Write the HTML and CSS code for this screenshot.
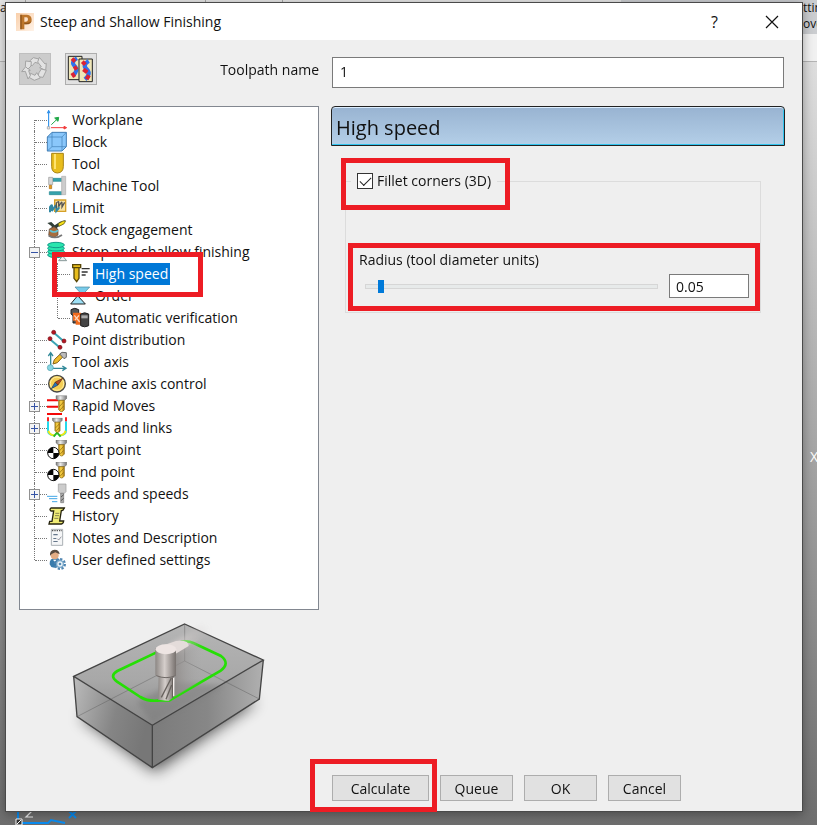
FILE: index.html
```html
<!DOCTYPE html>
<html lang="en">
<head>
<meta charset="utf-8">
<title>Steep and Shallow Finishing</title>
<link rel="stylesheet" href="styles.css">
</head>
<body>
<svg class="defs" aria-hidden="true">
  <defs>
    <linearGradient id="steel"><stop offset="0" stop-color="#777"/><stop offset=".4" stop-color="#eee"/><stop offset="1" stop-color="#777"/></linearGradient>
    <linearGradient id="gold"><stop offset="0" stop-color="#b98b12"/><stop offset=".4" stop-color="#ffd84a"/><stop offset="1" stop-color="#b07c10"/></linearGradient>
    <symbol id="cutter" viewBox="0 0 36 54">
      <path d="M2 1h32v8l-6 6H8L2 9z" fill="url(#steel)" stroke="#777" stroke-width="2"/>
      <path d="M10 15h17v28q-8 12-17 0z" fill="url(#gold)" stroke="#80600d" stroke-width="2"/>
      <path d="M12 34 25 20M14 44l11-12" stroke="#80600d" stroke-width="2"/>
    </symbol>
    <symbol id="datum" viewBox="0 0 60 60">
      <use href="#cutter" x="25" y="-1" width="36" height="54"/>
      <circle cx="19" cy="39" r="17" fill="#fff" stroke="#111" stroke-width="3"/>
      <path d="M19 39V22A17 17 0 0 0 2 39zM19 39v17a17 17 0 0 0 17-17z" fill="#050505"/>
    </symbol>
  </defs>
</svg>

<div class="workspace" aria-hidden="true">
  <div class="ribbon"><span class="ribbon-left">a</span><span class="ribbon-right">ttin<br>over</span></div>
  <div class="viewport">
    <span class="axis-x">X</span>
    <svg class="origin" viewBox="0 0 84 16"><path d="M13 2v8M17 14h26l3-3 14 3M64 9l7-7M64 2l7 7" fill="none" stroke="#0a8cf0" stroke-width="2"/><path d="m27 2-6 6h7" fill="none" stroke="#eee" stroke-width="1.2"/><path d="M11 10h6v6h-6z" fill="#333" stroke="#fff"/><path d="m12 15 4-4" stroke="#fff"/></svg>
  </div>
</div>

<main class="dialog">
  <header class="titlebar">
    <svg class="logo" viewBox="0 0 54 54" aria-hidden="true"><defs><linearGradient id="lg" x2="1" y2="1"><stop stop-color="#f9cfaa"/><stop offset="1" stop-color="#fff3e8"/></linearGradient></defs><path fill="url(#lg)" d="M0 0h54v54H0z"/><path fill="#bd762b" fill-rule="evenodd" d="M13 5h20q14 1 14 15T31 34h-6v15H13zm12 8v13h5q6 0 6-7t-6-6z"/><path fill="#8e541b" d="M13 5h4v44h-4zM25 34h6q13 0 16-12-2 7-11 7H25z"/></svg>
    <h1>Steep and Shallow Finishing</h1>
    <button class="window-button" type="button" aria-label="Help">?</button>
    <button class="window-button" type="button" aria-label="Close"><svg viewBox="0 0 14 14" width="14" height="14"><path d="m1 1 12 12M13 1 1 13" stroke="#111" stroke-width="1.2"/></svg></button>
  </header>

  <div class="content">
    <div class="tools">
      <button class="tool-button disabled" type="button" aria-label="Recycle" disabled>
        <svg viewBox="0 0 90 90"><g fill="#e2e2e2" stroke="#a4a4a4" stroke-width="3"><path d="m28 22 12-11 17 4-2 13-10-3-8 10-13-3z"/><path d="m58 10 17 20 4-2-2 21-18-8 5-3-11-14z"/><path d="m79 49-10 21-16-2 4-12 7-11z"/><path d="M61 72 43 79 27 70l5-12 13 6 5-8z"/><path d="m24 75-8-23-11 1 12-15 14 11-5 1 5 15z"/><path d="m16 37 1-16 17 2-1 13-9 9z"/></g></svg>
      </button>
      <button class="tool-button" type="button" aria-label="Copy toolpath">
        <svg viewBox="0 0 90 90"><path d="M7 7h41v70H7z" fill="#efe6b8" stroke="#222" stroke-width="3"/><path d="M33 13q-20 11-7 23t-6 30" fill="none" stroke="#2e72ee" stroke-width="12"/><path d="m18 14 9 9m-2 14 7 10M18 57l8 12" stroke="#dc2233" stroke-width="11"/><path d="M39 15h40v68H39z" fill="#efe6b8" stroke="#222" stroke-width="3"/><path d="M68 21q-20 12-6 25t-5 30" fill="none" stroke="#2e72ee" stroke-width="13"/><path d="m49 23 9 9m-6 14 12 9M62 76l7-12" stroke="#dc2233" stroke-width="12"/></svg>
      </button>
      <label for="toolpath-name">Toolpath name</label>
    </div>
    <div class="name-field"><input id="toolpath-name" type="text" value="1"></div>

    <div class="left">
      <nav class="tree-panel" aria-label="Toolpath settings">
        <ul class="tree">
          <li><div class="row"><svg viewBox="0 0 60 60"><path d="M5 53V4M1 10l4-9 4 9" stroke="#1684e8" stroke-width="3" fill="none"/><path d="m13 44 20-19m-10-1 12-2-2 12z" stroke="#22a94a" stroke-width="3" fill="#22a94a"/><path d="M12 53h42m-3-4 8 4-8 4z" stroke="#f23c3c" stroke-width="3" fill="#f23c3c"/><path d="M1 50h7v7H1z" fill="#eee" stroke="#999" stroke-width="2"/></svg><span>Workplane</span></div></li>
          <li><div class="row"><svg viewBox="0 0 60 60"><path d="M1 15 15 1h43v43L45 57H1z" fill="#8ac7fb" stroke="#417eb5" stroke-width="3"/><path d="M1 15h44v42M45 15 58 1M15 1v43h43M1 57l14-13" fill="none" stroke="#417eb5" stroke-width="2"/></svg><span>Block</span></div></li>
          <li><div class="row"><svg viewBox="0 0 60 60"><path d="M14-2h35v39q0 19-18 20Q14 56 14 37z" fill="#e8bd1d" stroke="#a78315" stroke-width="3"/><path d="M24 0v45" stroke="#ffe36e" stroke-width="6"/></svg><span>Tool</span></div></li>
          <li><div class="row"><svg viewBox="0 0 60 60"><path d="M18 7h26v9H18zM7 47h37v9H7z" fill="#36a3ad" stroke="#238791" stroke-width="2"/><path d="M44 1h12v55H44z" fill="#ccc" stroke="#aaa" stroke-width="2"/><path d="M5 4h12v22H5z" fill="#d6d6d6" stroke="#999" stroke-width="2"/><path d="M7 28h7v10H7z" fill="#e99b16" stroke="#a76a12" stroke-width="2"/></svg><span>Machine Tool</span></div></li>
          <li><div class="row"><svg viewBox="0 0 60 60"><path d="M23 6h33v34H23z" fill="#f8e2a3" stroke="#d5a027" stroke-width="4"/><path d="M9 43V27q7-10 6 0v12q12-22 13-14v14q6-6 9-11" stroke="#3188a3" stroke-width="6" fill="none"/><path d="M28 31V15q9-8 7 0v11q10-19 10-11v12l8-14" stroke="#555" stroke-width="4" fill="none"/></svg><span>Limit</span></div></li>
          <li><div class="row"><svg viewBox="0 0 60 60"><path d="m1 9 12-3 10 10L39 5l17-5-5 12-20 10-3 12H14V19z" fill="#303e37"/><path d="m34 11 14-8 8 1-6 8-14 7z" fill="#f6df19" stroke="#6c6510" stroke-width="2"/><path d="m7 27 14-7 12 8v17l-12 8-16-7z" fill="#a86d3d" stroke="#594538" stroke-width="2"/><path d="M9 31q12 10 24 0" stroke="#5cc8dd" stroke-width="5" fill="none"/><path d="M5 47q20 12 40-2" stroke="#777" stroke-width="5" fill="none"/></svg><span>Stock engagement</span></div></li>
          <li><div class="row"><button class="expander open" type="button" aria-label="Collapse Steep and shallow finishing"></button><svg viewBox="0 0 60 60"><g fill="#29e6ae" stroke="#149b8a" stroke-width="3"><ellipse cx="27" cy="39" rx="25" ry="8"/><ellipse cx="27" cy="29" rx="25" ry="8"/><ellipse cx="27" cy="19" rx="25" ry="8"/><ellipse cx="27" cy="9" rx="25" ry="8"/></g><path d="m35 56 12-14 12 14z" fill="#eee" stroke="#899" stroke-width="3"/></svg><span>Steep and shallow finishing</span></div>
            <ul>
              <li><div class="row"><svg viewBox="0 0 60 60"><path d="M8 2h24v9H8zm4 9h15v32l-7 10-8-10z" fill="#e8bd1c" stroke="#594707" stroke-width="4"/><path d="M35 14h24M35 24h18M35 33h12" stroke="#333" stroke-width="4"/></svg><span class="selected" aria-current="true">High speed</span></div></li>
              <li><div class="row"><svg viewBox="0 0 60 60"><path d="M15 3h44L37 27z" fill="#79cbea" stroke="#468297" stroke-width="2"/><path d="M23 29 46 54H2z" fill="#9de0f5" stroke="#222" stroke-width="3"/></svg><span>Order</span></div></li>
              <li><div class="row"><svg viewBox="0 0 60 60"><path d="M3 5q11-8 23 0v14l-4 6v20H9V23l-6-5z" fill="#555" stroke="#222" stroke-width="3"/><path d="M9 14h24v36H17V38H9z" fill="#f06a1c"/><path d="m13 22 16 20M27 22 15 36" stroke="#ffd4b7" stroke-width="4"/><path d="M32 18q12-7 24 0v35q-12 7-24 0z" fill="#444" stroke="#222" stroke-width="3"/><path d="M34 22h19v9H34z" fill="#aaa"/></svg><span>Automatic verification</span></div></li>
            </ul>
            <i class="mark mark-tree"></i>
          </li>
          <li><div class="row"><svg viewBox="0 0 60 60"><path d="m19 7 31 27M8 27l32 27" stroke="#3ba4b4" stroke-width="6"/><g fill="#b51621" stroke="#74121a" stroke-width="2"><circle cx="20" cy="7" r="6"/><circle cx="51" cy="33" r="6"/><circle cx="9" cy="26" r="6"/><circle cx="39" cy="52" r="6"/></g></svg><span>Point distribution</span></div></li>
          <li><div class="row"><svg viewBox="0 0 60 60"><path d="M11 44V5M4 12l7-10 7 10M13 49h40m-7-7 11 7-11 7" fill="none" stroke="#318999" stroke-width="4"/><path d="m18 36 4-13 18-17 8 8-17 18z" fill="#edbc2f" stroke="#876315" stroke-width="3"/><path d="m38 6 7-5 13 1v14l-7 4z" fill="#bbb" stroke="#666" stroke-width="3"/><circle cx="10" cy="47" r="9" fill="#88d5e2" stroke="#4b9eac" stroke-width="2"/></svg><span>Tool axis</span></div></li>
          <li><div class="row"><svg viewBox="0 0 60 60"><circle cx="30" cy="29" r="25" fill="#f5ce54" stroke="#464646" stroke-width="4"/><circle cx="30" cy="29" r="20" fill="none" stroke="#fff0a5" stroke-width="3"/><path d="m13 44 12-20 8 9z" fill="#2473bf" stroke="#25374b" stroke-width="2"/><path d="m47 13-22 11 8 9z" fill="#b84b21" stroke="#5b2511" stroke-width="2"/></svg><span>Machine axis control</span></div></li>
          <li><div class="row"><button class="expander" type="button" aria-label="Expand Rapid Moves"></button><svg viewBox="0 0 60 60"><path d="M0 13h33M0 32h33M0 54h45" stroke="#f40909" stroke-width="6"/><use href="#cutter" x="25" y="-2" width="36" height="54"/></svg><span>Rapid Moves</span></div></li>
          <li><div class="row"><button class="expander" type="button" aria-label="Expand Leads and links"></button><svg viewBox="0 0 60 60"><path d="M3 10v27q0 13 15 15M57 10v27q0 13-15 15" stroke="#24d9eb" stroke-width="6" fill="none"/><path d="M3-2v12M57-2v12" stroke="#f22" stroke-width="6"/><path d="M4 38q4 14 19 14M56 38q-4 14-19 14" stroke="#f0e612" stroke-width="6" fill="none"/><path d="m20 56 10-12 11 12" stroke="#25ba25" stroke-width="6" fill="none"/><use href="#cutter" x="14" y="-1" width="34" height="49"/></svg><span>Leads and links</span></div></li>
          <li><div class="row"><svg><use href="#datum"/></svg><span>Start point</span></div></li>
          <li><div class="row"><svg><use href="#datum"/></svg><span>End point</span></div></li>
          <li><div class="row"><button class="expander" type="button" aria-label="Expand Feeds and speeds"></button><svg viewBox="0 0 60 60"><path d="M0 37h31M6 44h25M15 53h16" stroke="#44a8e7" stroke-width="3"/><path d="M34 0h23v23l-5 5H39l-5-5z" fill="#ccc" stroke="#999" stroke-width="2"/><path d="M41 28h9v28h-9z" fill="#aaa" stroke="#777" stroke-width="2"/><path d="m42 39 8-7m-8 18 8-7" stroke="#555" stroke-width="3"/></svg><span>Feeds and speeds</span></div></li>
          <li><div class="row"><svg viewBox="0 0 60 60"><path d="M12 6h40q-3 8-9 8l-5 31h12q-1 8-7 9H6l2-8h7l5-31h-8q-6-5 0-9z" fill="#f0ec75" stroke="#27240e" stroke-width="4"/><path d="M25 22h12M24 29h12M22 37h12" stroke="#88844b" stroke-width="3"/></svg><span>History</span></div></li>
          <li><div class="row"><svg viewBox="0 0 60 60"><path d="M13 4h34v48H13z" fill="#f5f6f7" stroke="#aab0b5" stroke-width="3"/><path d="M15 8h30" stroke="#555" stroke-width="4" stroke-dasharray="4 3"/><path d="M19 18h13v4H19zm0 12h9v3h-9zm0 9h13v3H19z" fill="#65768a"/><path d="m31 32 4 4 8-10" fill="none" stroke="#667" stroke-width="2"/></svg><span>Notes and Description</span></div></li>
          <li><div class="row"><svg viewBox="0 0 60 60"><path d="M8 43q-1-19 17-19t18 20q-13 14-30 7z" fill="#397cad"/><circle cx="23" cy="16" r="12" fill="#e3ad85"/><path d="M9 17Q7 0 23-1q14 0 15 14L25 7 14 12z" fill="#594b3f"/><path d="m18 29 5 6 6-6" fill="#fff"/><circle cx="39" cy="42" r="13" fill="none" stroke="#4e84b0" stroke-width="10" stroke-dasharray="6 4"/><circle cx="39" cy="42" r="10" fill="#eef5fa" stroke="#7caacb" stroke-width="4"/><circle cx="39" cy="42" r="4" fill="#548bb4"/></svg><span>User defined settings</span></div></li>
        </ul>
      </nav>
      <svg class="illustration" viewBox="0 0 660 510" role="img" aria-label="Tool path around a block">
        <defs>
          <filter id="soft" x="-30%" y="-30%" width="160%" height="160%"><feGaussianBlur stdDeviation="22"/></filter>
          <filter id="haze" x="-30%" y="-30%" width="160%" height="160%"><feGaussianBlur stdDeviation="8"/></filter>
          <linearGradient id="topface" x2="0" y2="1"><stop stop-color="#b5b5b5"/><stop offset=".55" stop-color="#a8a8a8"/><stop offset="1" stop-color="#898989"/></linearGradient>
          <linearGradient id="leftface" x2="1" y2=".3"><stop stop-color="#bcbcbc"/><stop offset=".6" stop-color="#858585"/><stop offset="1" stop-color="#777"/></linearGradient>
          <linearGradient id="rightface"><stop stop-color="#7b7b7b"/><stop offset=".5" stop-color="#878787"/><stop offset="1" stop-color="#b0b0b0"/></linearGradient>
          <linearGradient id="shank"><stop stop-color="#8c8784"/><stop offset=".45" stop-color="#d5cecb"/><stop offset="1" stop-color="#77716e"/></linearGradient>
          <linearGradient id="trail"><stop stop-color="#e8e0df"/><stop offset="1" stop-color="#c4c0bf" stop-opacity="0"/></linearGradient>
          <linearGradient id="trailside"><stop stop-color="#8e8987"/><stop offset="1" stop-color="#aaa" stop-opacity="0"/></linearGradient>
        </defs>
        <path d="M60 305 300 190 590 260 285 470z" fill="#000" opacity=".65" filter="url(#soft)"/>
        <path d="M374 27 610 135 277 331 41 184z" fill="url(#topface)"/>
        <path d="M41 184 277 331v127L51 305z" fill="url(#leftface)"/>
        <path d="m277 331 333-196-12 117-321 206z" fill="url(#rightface)"/>
        <path d="m230 262 110-60 150 10-212 112z" fill="#777" opacity=".45" filter="url(#haze)"/>
        <path d="M51 305 374 138l224 114M374 27v111" fill="none" stroke="#555" stroke-width="2" opacity=".6"/>
        <path d="M374 27 610 135 277 331 41 184zM41 184l10 121 226 153 321-206 12-117M277 331v127" fill="none" stroke="#444" stroke-width="4"/>
        <path d="M288 113 172 168q-25 14-1 32l70 46q24 15 59 10h28l153-88q31-23 2-45l-83-39q-22-10-48 1z" fill="none" stroke="#25df05" stroke-width="8"/>
        <path d="M330 91 415 35q30-9 37 12l-30 30-72 44z" fill="url(#trail)" opacity=".75" filter="url(#haze)"/>
        <path d="m344 112 86-42v125l-86 50z" fill="url(#trailside)" opacity=".8"/>
        <path d="m288 98 60-20q40-3 38 15l-40 24z" fill="#e4dcda"/>
        <path d="M296 183h46l-4 66-12 9-32-4z" fill="url(#shank)"/>
        <path d="m304 247 30-58M318 253l17-43M338 188v60" stroke="#68625e" stroke-width="4"/>
        <path d="M341 188v56" stroke="#f5efed" stroke-width="4"/>
        <path d="M286 101q31-23 62 0v80q-30 17-62 0z" fill="url(#shank)"/>
        <ellipse cx="318" cy="103" rx="31" ry="15" fill="#eee5e3"/>
        <path d="M289 182q29 12 58 0" fill="none" stroke="#6f6966" stroke-width="3"/>
      </svg>
    </div>

    <section class="right">
      <h2>High speed</h2>
      <fieldset>
        <legend><label><input type="checkbox" checked>Fillet corners (3D)</label><i class="mark mark-check"></i></legend>
        <div class="radius">
          <label for="radius">Radius (tool diameter units)</label>
          <div class="radius-row">
            <input id="radius" type="range" min="0" max="1.2" step="0.01" value="0.05">
            <input class="radius-value" type="text" value="0.05" aria-label="Radius value">
          </div>
          <i class="mark mark-radius"></i>
        </div>
      </fieldset>
      <footer>
        <button class="primary" type="button">Calculate</button>
        <button type="button">Queue</button>
        <button type="button">OK</button>
        <button type="button">Cancel</button>
        <i class="mark mark-calc"></i>
      </footer>
    </section>
  </div>
</main>
</body>
</html>
```
FILE: styles.css
```css
* { box-sizing: border-box; }

body {
  margin: 0;
  min-height: 100vh;
  padding: 2px 14px 13px 5px;
  display: flex;
  font: 14px/20px "Open Sans", "Noto Sans", sans-serif;
  color: #111;
}

button, input { font: inherit; color: inherit; }
h1, h2, ul { margin: 0; padding: 0; font-weight: 400; }
.defs { position: absolute; width: 0; height: 0; }

/* Application behind the dialog */
.workspace { position: fixed; inset: 0; display: flex; flex-direction: column; overflow: hidden; }
.ribbon {
  height: 62px;
  display: flex;
  justify-content: space-between;
  border-bottom: 1px solid #b4b4b4;
  background: linear-gradient(#cbcdd0 34px, #f1f1f1 34px);
  font-size: 12px;
  line-height: 16px;
}
.ribbon-left {
  width: 76%;
  background:
    linear-gradient(#a8a8a8, #a8a8a8) 25px 0 / 1px 100% no-repeat,
    linear-gradient(#a8a8a8, #a8a8a8) 205px 0 / 1px 100% no-repeat,
    linear-gradient(#a8a8a8, #a8a8a8) 282px 0 / 1px 100% no-repeat,
    #e6e6e6;
}
.ribbon-right { width: 14px; overflow: hidden; }
.viewport { flex: 1; position: relative; background: linear-gradient(#dedede, #6e6e6e); }
.axis-x { position: absolute; left: calc(100% - 7px); top: 385px; color: #fff; }
.origin { position: absolute; left: 5px; bottom: 0; width: 84px; height: 16px; }

/* Dialog */
.dialog {
  position: relative;
  flex: 1;
  display: flex;
  flex-direction: column;
  border: 1px solid #4a4a4a;
  background: #efefef;
  box-shadow: 0 2px 10px rgba(0, 0, 0, .35);
}
.titlebar { height: 37px; display: flex; align-items: center; background: #fff; padding: 0 2px 0 10px; }
.logo { width: 18px; height: 18px; margin-right: 6px; }
h1 { flex: 1; font-size: 14px; line-height: 20px; }
.window-button { width: 57px; height: 36px; padding: 0; border: 0; background: none; font-size: 16px; display: grid; place-items: center; }

.content {
  flex: 1;
  display: grid;
  grid-template-columns: 300px 1fr;
  grid-template-rows: 32px 1fr;
  gap: 21px 12px;
  padding: 13px 17px 10px 13px;
}
.tools { display: flex; align-items: center; gap: 14px; }
.tools label { flex: 1; text-align: right; padding-top: 2px; }
.tool-button { width: 32px; height: 32px; padding: 0; border: 1px solid #adadad; background: #e1e1e1; }
.tool-button svg { display: block; width: 30px; height: 30px; }
.tool-button.disabled { background: #ccc; border-color: #bfbfbf; }
.name-field { padding: 4px 1px 0; }
.name-field input { width: 100%; height: 31px; padding: 0 7px 2px; border: 1px solid #7a7a7a; background: #fff; display: block; }

/* Settings tree */
.left { display: flex; flex-direction: column; }
.tree-panel { flex: 1; border: 1px solid #828790; background: #fff; padding-top: 2px; }
.tree, .tree ul { list-style: none; }
.tree ul { margin-left: 23px; }
.tree li { position: relative; }
.tree li::before { content: ""; position: absolute; left: 14px; top: 0; bottom: 0; border-left: 1px dotted #777; }
.tree > li:first-child::before { top: 11px; }
.tree li:last-child::before { bottom: auto; height: 11px; }
.row { position: relative; height: 22px; display: flex; align-items: center; gap: 3px; padding-left: 27px; white-space: nowrap; }
.row::before { content: ""; position: absolute; left: 15px; width: 12px; top: 11px; border-top: 1px dotted #777; }
.row svg { width: 20px; height: 20px; overflow: visible; }
.row span { padding: 0 2px; line-height: 22px; }
.row .selected { background: #0078d7; color: #fff; }
.expander {
  position: absolute;
  left: 9px;
  top: 6px;
  width: 11px;
  height: 11px;
  padding: 0;
  border: 1px solid #919191;
  background:
    linear-gradient(#3553a5, #3553a5) center / 7px 1px no-repeat,
    linear-gradient(#3553a5, #3553a5) center / 1px 7px no-repeat,
    #f4f4f4;
}
.expander.open { background: linear-gradient(#3553a5, #3553a5) center / 7px 1px no-repeat, #f4f4f4; }
.illustration { width: 220px; height: 170px; margin: 5px 0 16px 41px; overflow: visible; }

/* Settings page */
.right { display: flex; flex-direction: column; }
h2 {
  height: 40px;
  padding: 0 4px;
  border: 1px solid #222;
  border-radius: 4px 4px 0 0;
  background: linear-gradient(#98b3d1, #b4cfe8);
  box-shadow: inset 0 1px #dceeff, inset -1px -1px #30c4ee;
  font-size: 20px;
  line-height: 42px;
}
fieldset { margin: 25px 24px 0 14px; padding: 0 11px 0 5px; border: 1px solid #dcdcdc; }
legend { position: relative; padding: 0 6px; line-height: 20px; }
legend label { display: flex; align-items: center; gap: 4px; }
input[type="checkbox"] {
  appearance: none;
  width: 16px;
  height: 16px;
  margin: 0;
  border: 1px solid #333;
  background: #fff;
  display: grid;
  place-items: center;
}
input[type="checkbox"]::before { content: ""; width: 10px; height: 5px; border: solid #222; border-width: 0 0 1px 1px; transform: translateY(-1px) rotate(-45deg); }
.radius { position: relative; margin: 59px 0 0; padding: 0 0 14px 8px; }
.radius-row { display: flex; align-items: center; gap: 11px; margin-top: 4px; padding-left: 6px; }
input[type="range"] { appearance: none; flex: 1; min-width: 0; height: 14px; margin: 0; background: none; }
input[type="range"]::-webkit-slider-runnable-track { height: 5px; border: 1px solid #d6d6d6; background: #e7eaea; }
input[type="range"]::-webkit-slider-thumb { appearance: none; width: 6px; height: 13px; margin-top: -5px; background: #007ad9; }
.radius-value { width: 80px; height: 24px; padding: 0 6px; border: 1px solid #7a7a7a; background: #fff; }

footer { position: relative; margin-top: auto; padding-left: 1px; display: flex; gap: 11px; }
footer button { width: 73px; height: 26px; padding: 1px 0 0; border: 1px solid #adadad; background: #e1e1e1; }
footer .primary { width: 97px; }

/* Red callout frames */
.mark { position: absolute; border: 5px solid #ed1c24; pointer-events: none; }
.mark-tree { left: 32px; top: 11px; width: 151px; height: 45px; z-index: 1; }
.mark-check { left: -10px; top: -13px; width: 169px; height: 52px; }
.mark-radius { left: -3px; right: -11px; top: -7px; bottom: 1px; }
.mark-calc { left: -21px; top: -16px; width: 127px; height: 53px; }
```
